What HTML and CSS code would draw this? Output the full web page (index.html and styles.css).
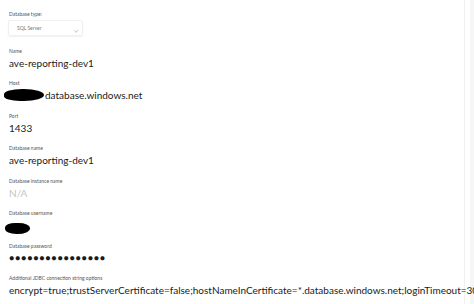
FILE: index.html
```html
<!DOCTYPE html>
<html>
<head>
<meta charset="utf-8">
<link rel="stylesheet" href="styles.css">
</head>
<body>
<div class="form">
  <div class="field first">
    <div class="label">Database type:</div>
    <div class="select"><span>SQL Server</span><span class="chev"></span></div>
  </div>
  <div class="field">
    <div class="label">Name</div>
    <div class="value">ave-reporting-dev1</div>
  </div>
  <div class="field">
    <div class="label">Host</div>
    <div class="value host"><span class="blob blob-host"></span>database.windows.net</div>
  </div>
  <div class="field">
    <div class="label">Port</div>
    <div class="value">1433</div>
  </div>
  <div class="field">
    <div class="label">Database name</div>
    <div class="value">ave-reporting-dev1</div>
  </div>
  <div class="field">
    <div class="label">Database instance name</div>
    <div class="value muted">N/A</div>
  </div>
  <div class="field">
    <div class="label">Database username</div>
    <div class="value"><span class="blob blob-user"></span></div>
  </div>
  <div class="field">
    <div class="label">Database password</div>
    <div class="value dots">●●●●●●●●●●●●●●●●</div>
  </div>
  <div class="field">
    <div class="label">Additional JDBC connection string options</div>
    <div class="value nowrap">encrypt=true;trustServerCertificate=false;hostNameInCertificate=*.database.windows.net;loginTimeout=30;</div>
  </div>
</div>
</body>
</html>
```
FILE: styles.css
```css
html, body {
  margin: 0;
  padding: 0;
  height: 100%;
  overflow: hidden;
}
body {
  font-family: Lato, "Open Sans", sans-serif;
  color: #1a1a1a;
  background:
    linear-gradient(to right, transparent 464px, #f0f0f0 464px, #f0f0f0 465px, #ffffff 465px, #ffffff 470px, #f6f6f6 470px);
}
.form {
  padding: 10px 0 0 9px;
  display: flex;
  flex-direction: column;
  width: 465px;
  overflow: hidden;
}
.field {
  display: flex;
  flex-direction: column;
  margin-top: 8.5px;
}
.field.first {
  margin-top: 0;
  margin-bottom: 2px;
}
.label {
  font-size: 5px;
  line-height: 8px;
  color: #555;
  height: 8px;
}
.value {
  font-size: 10px;
  line-height: 16px;
  height: 16px;
  display: flex;
  align-items: center;
  white-space: nowrap;
}
.value.muted {
  color: #c4c4c4;
}
.value.dots {
  font-size: 8.5px;
  letter-spacing: 0.95px;
}
.select {
  margin-top: 2px;
  margin-left: -1px;
  width: 75px;
  height: 16px;
  box-sizing: border-box;
  border: 1px solid #f0f0f0;
  border-radius: 2px;
  box-shadow: 0 1px 2px rgba(0,0,0,0.06);
  display: flex;
  align-items: center;
  justify-content: space-between;
  padding: 0 5px 0 8px;
  font-size: 5px;
  color: #777;
}
.chev {
  width: 1.5px;
  height: 1.5px;
  border-right: 0.5px solid #ccc;
  border-bottom: 0.5px solid #ccc;
  transform: rotate(45deg);
  margin-top: 4px;
}
.blob {
  display: inline-block;
  background: #000;
  filter: blur(0.6px);
}
.blob-host {
  width: 40px;
  height: 12px;
  border-radius: 45% 50% 50% 40%;
  margin-left: -5px;
  margin-right: 1px;
}
.blob-user {
  width: 25px;
  height: 11px;
  border-radius: 40% 45% 50% 45%;
  margin-left: -4px;
  margin-top: 6px;
}
```
